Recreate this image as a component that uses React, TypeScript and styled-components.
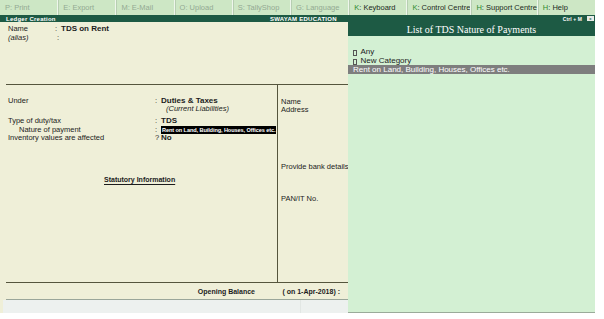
import React from "react";
import styled, { createGlobalStyle } from "styled-components";

const Global = createGlobalStyle`
  html, body { margin: 0; padding: 0; background: #ffffff; }
  body { width: 604px; height: 319px; overflow: hidden; font-family: "Liberation Sans", Arial, sans-serif; }
`;

const Page = styled.div`
  width: 604px;
  height: 319px;
  display: flex;
  flex-direction: column;
  background: #ffffff;
`;

const MenuBar = styled.div`
  height: 15px;
  width: 595px;
  display: flex;
  background: #cde7c5;
`;

const MenuItem = styled.div<{ $active?: boolean; $first?: boolean }>`
  flex: 1 1 0;
  display: flex;
  align-items: center;
  padding-left: 5px;
  font-size: 7.5px;
  color: ${(p) => (p.$active ? "#1c2a1c" : "#93aa93")};
  border-left: ${(p) => (p.$first ? "none" : "1px solid #eef6ec")};
  box-shadow: ${(p) => (p.$first ? "none" : "inset 1px 0 0 #b7ceb2")};
  white-space: nowrap;
`;

const Key = styled.span<{ $active?: boolean }>`
  color: ${(p) => (p.$active ? "#2e8b2e" : "#93aa93")};
`;

const TitleBar = styled.div`
  height: 7px;
  width: 595px;
  background: #1d5a44;
  display: flex;
  align-items: center;
  color: #ffffff;
  font-size: 6px;
  font-weight: bold;
  padding: 0 0 0 6px;
  box-sizing: border-box;
  letter-spacing: 0.25px;
`;

const TitleLeft = styled.span`
  flex: 1 1 0;
`;

const TitleCenter = styled.span`
  flex: 0 0 auto;
  margin-right: 226px;
`;

const TitleRight = styled.span`
  flex: 0 0 auto;
  margin-right: 5px;
  font-size: 5px;
  letter-spacing: 0.1px;
`;

const CloseBox = styled.span`
  width: 7px;
  height: 5px;
  background: #e8ece8;
  color: #1d5a44;
  font-size: 4px;
  display: flex;
  align-items: center;
  justify-content: center;
  margin-right: 1px;
`;

const Main = styled.div`
  display: flex;
  width: 595px;
  height: 291px;
`;

const LeftPane = styled.div`
  width: 348px;
  display: flex;
  flex-direction: column;
  background: #efefd8;
`;

const TopSection = styled.div`
  height: 63px;
  padding: 3px 0 0 2px;
  box-sizing: border-box;
  border-bottom: 1px solid #55553d;
  margin-left: 6px;
  font-size: 7.5px;
  color: #1c1c1c;
`;

const FieldRow = styled.div`
  display: flex;
  height: 8.5px;
  align-items: center;
  line-height: 8.5px;
  white-space: nowrap;
`;

const FieldLabel = styled.span<{ $w: number; $italic?: boolean; $indent?: number }>`
  width: ${(p) => p.$w}px;
  flex: 0 0 auto;
  font-style: ${(p) => (p.$italic ? "italic" : "normal")};
  padding-left: ${(p) => p.$indent ?? 0}px;
  box-sizing: border-box;
`;

const Colon = styled.span`
  width: 6px;
  flex: 0 0 auto;
`;

const Value = styled.span<{ $bold?: boolean; $italic?: boolean }>`
  font-weight: ${(p) => (p.$bold ? "bold" : "normal")};
  font-style: ${(p) => (p.$italic ? "italic" : "normal")};
  font-size: ${(p) => (p.$bold ? "8px" : "7.5px")};
`;

const MiddleSection = styled.div`
  height: 198px;
  display: flex;
`;

const MainCol = styled.div`
  width: 278px;
  box-sizing: border-box;
  border-right: 1px solid #55553d;
  padding: 12px 0 0 8px;
  font-size: 7.5px;
  color: #1c1c1c;
  display: flex;
  flex-direction: column;
`;

const SubCol = styled.div`
  flex: 1 1 0;
  padding: 13px 0 0 3px;
  font-size: 7.5px;
  color: #1c1c1c;
  display: flex;
  flex-direction: column;
  white-space: nowrap;
  overflow: hidden;
`;

const SubLine = styled.div<{ $gap?: number }>`
  line-height: 8px;
  margin-top: ${(p) => p.$gap ?? 0}px;
`;

const Spacer = styled.div<{ $h: number }>`
  height: ${(p) => p.$h}px;
  flex: 0 0 auto;
`;

const Highlight = styled.span`
  background: #000000;
  color: #ffffff;
  font-weight: bold;
  font-size: 5.6px;
  letter-spacing: -0.1px;
  padding: 0 1px;
  height: 8px;
  line-height: 8px;
  display: inline-block;
  white-space: nowrap;
`;

const SectionTitle = styled.div`
  font-weight: bold;
  font-size: 7px;
  text-decoration: underline;
  text-underline-offset: 2px;
  margin-left: 96px;
`;

const OpeningRow = styled.div`
  height: 16px;
  margin-left: 6px;
  border-top: 1px solid #55553d;
  border-bottom: 1px solid #9aa69a;
  display: flex;
  align-items: center;
  font-size: 7px;
  font-weight: bold;
  color: #1c1c1c;
`;

const OpeningLabel = styled.span`
  width: 249px;
  text-align: right;
`;

const OpeningDate = styled.span`
  margin-left: auto;
  padding-right: 8px;
`;

const FooterStrip = styled.div`
  height: 13px;
  margin-left: 3px;
  display: flex;
  background: #edf1ef;
`;

const FooterCell = styled.div<{ $w?: number }>`
  width: ${(p) => (p.$w ? `${p.$w}px` : "auto")};
  flex: ${(p) => (p.$w ? "0 0 auto" : "1 1 0")};
  border-right: ${(p) => (p.$w ? "1px solid #e2e7e4" : "none")};
`;

const RightPane = styled.div`
  flex: 1 1 0;
  background: #d3f0d3;
  border-bottom: 1px solid #9aab9a;
  display: flex;
  flex-direction: column;
`;

const ListHeader = styled.div`
  height: 14px;
  background: #1d5a44;
  color: #ffffff;
  font-family: "Liberation Serif", "Times New Roman", serif;
  font-size: 10px;
  display: flex;
  align-items: center;
  justify-content: center;
`;

const ListBody = styled.div`
  padding-top: 12px;
  display: flex;
  flex-direction: column;
  font-size: 8px;
  color: #1c1c1c;
`;

const ListItem = styled.div<{ $selected?: boolean }>`
  height: ${(p) => (p.$selected ? "9px" : "8.5px")};
  line-height: ${(p) => (p.$selected ? "9px" : "8.5px")};
  display: flex;
  align-items: center;
  padding-left: 5px;
  background: ${(p) => (p.$selected ? "#7e7e7e" : "transparent")};
  color: ${(p) => (p.$selected ? "#ffffff" : "#1c1c1c")};
  white-space: nowrap;
`;

const Bullet = styled.span`
  display: inline-block;
  width: 1.5px;
  height: 4px;
  border: 0.5px solid #555;
  margin-right: 4px;
  margin-top: 2px;
`;

const menu: { k: string; t: string; active: boolean }[] = [
  { k: "P", t: ": Print", active: false },
  { k: "E", t: ": Export", active: false },
  { k: "M", t: ": E-Mail", active: false },
  { k: "O", t: ": Upload", active: false },
  { k: "S", t: ": TallyShop", active: false },
  { k: "G", t: ": Language", active: false },
  { k: "K", t: ": Keyboard", active: true },
  { k: "K", t: ": Control Centre", active: true },
  { k: "H", t: ": Support Centre", active: true },
  { k: "H", t: ": Help", active: true },
];

export default function App() {
  return (
    <Page>
      <Global />
      <MenuBar>
        {menu.map((m, i) => (
          <MenuItem key={i} $active={m.active} $first={i === 0}>
            <Key $active={m.active}>{m.k}</Key>
            {m.t}
          </MenuItem>
        ))}
      </MenuBar>
      <TitleBar>
        <TitleLeft>Ledger Creation</TitleLeft>
        <TitleCenter>SWAYAM EDUCATION</TitleCenter>
        <TitleRight>Ctrl + M</TitleRight>
        <CloseBox>x</CloseBox>
      </TitleBar>
      <Main>
        <LeftPane>
          <TopSection>
            <FieldRow>
              <FieldLabel $w={47}>Name</FieldLabel>
              <Colon>:</Colon>
              <Value $bold>TDS on Rent</Value>
            </FieldRow>
            <FieldRow>
              <FieldLabel $w={49} $italic>(alias)</FieldLabel>
              <Colon>:</Colon>
            </FieldRow>
          </TopSection>
          <MiddleSection>
            <MainCol>
              <FieldRow>
                <FieldLabel $w={147}>Under</FieldLabel>
                <Colon>:</Colon>
                <Value $bold>Duties &amp; Taxes</Value>
              </FieldRow>
              <FieldRow>
                <FieldLabel $w={158} />
                <Value $italic>(Current Liabilities)</Value>
              </FieldRow>
              <Spacer $h={3.5} />
              <FieldRow>
                <FieldLabel $w={147}>Type of duty/tax</FieldLabel>
                <Colon>:</Colon>
                <Value $bold>TDS</Value>
              </FieldRow>
              <FieldRow>
                <FieldLabel $w={147} $indent={11}>Nature of payment</FieldLabel>
                <Colon>:</Colon>
                <Highlight>Rent on Land, Building, Houses, Offices etc.</Highlight>
              </FieldRow>
              <FieldRow>
                <FieldLabel $w={147}>Inventory values are affected</FieldLabel>
                <Colon>?</Colon>
                <Value $bold>No</Value>
              </FieldRow>
              <Spacer $h={33} />
              <SectionTitle>Statutory Information</SectionTitle>
            </MainCol>
            <SubCol>
              <SubLine>Name</SubLine>
              <SubLine>Address</SubLine>
              <SubLine $gap={49}>Provide bank details</SubLine>
              <SubLine $gap={24}>PAN/IT No.</SubLine>
            </SubCol>
          </MiddleSection>
          <OpeningRow>
            <OpeningLabel>Opening Balance</OpeningLabel>
            <OpeningDate>( on 1-Apr-2018) :</OpeningDate>
          </OpeningRow>
          <FooterStrip>
            <FooterCell $w={297} />
            <FooterCell />
          </FooterStrip>
        </LeftPane>
        <RightPane>
          <ListHeader>List of TDS Nature of Payments</ListHeader>
          <ListBody>
            <ListItem>
              <Bullet />
              Any
            </ListItem>
            <ListItem>
              <Bullet />
              New Category
            </ListItem>
            <ListItem $selected>Rent on Land, Building, Houses, Offices etc.</ListItem>
          </ListBody>
        </RightPane>
      </Main>
    </Page>
  );
}
